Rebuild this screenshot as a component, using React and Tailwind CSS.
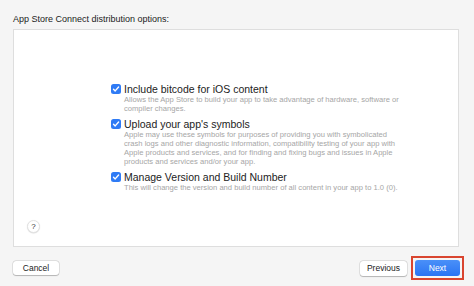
import React from "react";

const OPTIONS = [
  {
    label: "Include bitcode for iOS content",
    lines: [
      "Allows the App Store to build your app to take advantage of hardware, software or",
      "compiler changes.",
    ],
  },
  {
    label: "Upload your app's symbols",
    lines: [
      "Apple may use these symbols for purposes of providing you with symbolicated",
      "crash logs and other diagnostic information, compatibility testing of your app with",
      "Apple products and services, and for finding and fixing bugs and issues in Apple",
      "products and services and/or your app.",
    ],
  },
  {
    label: "Manage Version and Build Number",
    lines: ["This will change the version and build number of all content in your app to 1.0 (0)."],
  },
];

function Check() {
  return (
    <div className="w-[10px] h-[10px] rounded-[2.5px] bg-[#2f7bf5] flex items-center justify-center shrink-0">
      <svg width="8" height="8" viewBox="0 0 8 8">
        <path d="M1.5 4.2 L3.2 5.9 L6.6 2" fill="none" stroke="#fff" strokeWidth="1.4" strokeLinecap="round" strokeLinejoin="round" />
      </svg>
    </div>
  );
}

export default function App() {
  return (
    <div
      className="w-[474px] h-[286px] bg-[#f5f5f5] flex flex-col px-[13px] overflow-hidden"
      style={{ fontFamily: '"Liberation Sans", Arial, sans-serif' }}
    >
      <div className="pt-[14px] h-[29px] text-[9px] leading-[11px] text-[#222]">
        App Store Connect distribution options:
      </div>

      <div className="w-[446px] h-[218px] bg-white border border-[#dedede] flex flex-col pl-[97px] pt-[53px] relative">
        <div className="flex flex-col gap-[5px]">
          {OPTIONS.map((o) => (
            <div key={o.label} className="flex gap-[3px]">
              <div className="pt-[1px]">
                <Check />
              </div>
              <div className="flex flex-col">
                <div className="text-[10.5px] leading-[12px] text-[#222]">{o.label}</div>
                {o.lines.map((l) => (
                  <div key={l} className="text-[7.6px] leading-[9px] text-[#a6a6a6] whitespace-nowrap">
                    {l}
                  </div>
                ))}
              </div>
            </div>
          ))}
        </div>
        <div className="absolute left-[13px] bottom-[13px] w-[13px] h-[13px] rounded-full bg-white border border-[#e2e2e2] shadow-[0_0.5px_1px_rgba(0,0,0,0.15)] flex items-center justify-center text-[8px] text-[#333]">
          ?
        </div>
      </div>

      <div className="flex items-center mt-[9px]">
        <div className="w-[46px] h-[14px] bg-white rounded-[3px] shadow-[0_0_0_0.5px_rgba(0,0,0,0.15),0_0.5px_1px_rgba(0,0,0,0.2)] flex items-center justify-center text-[8.5px] text-[#222]">
          Cancel
        </div>
        <div className="ml-auto w-[47px] h-[15px] bg-white rounded-[3px] shadow-[0_0_0_0.5px_rgba(0,0,0,0.15),0_0.5px_1px_rgba(0,0,0,0.2)] flex items-center justify-center text-[8.5px] text-[#222]">
          Previous
        </div>
        <div className="ml-[4px] mr-[-3px] border-2 border-[#d9452f] p-[2px]">
          <div className="w-[45px] h-[16px] rounded-[3px] bg-gradient-to-b from-[#4a90f8] to-[#2a74f3] flex items-center justify-center text-[8.5px] text-white">
            Next
          </div>
        </div>
      </div>
    </div>
  );
}
